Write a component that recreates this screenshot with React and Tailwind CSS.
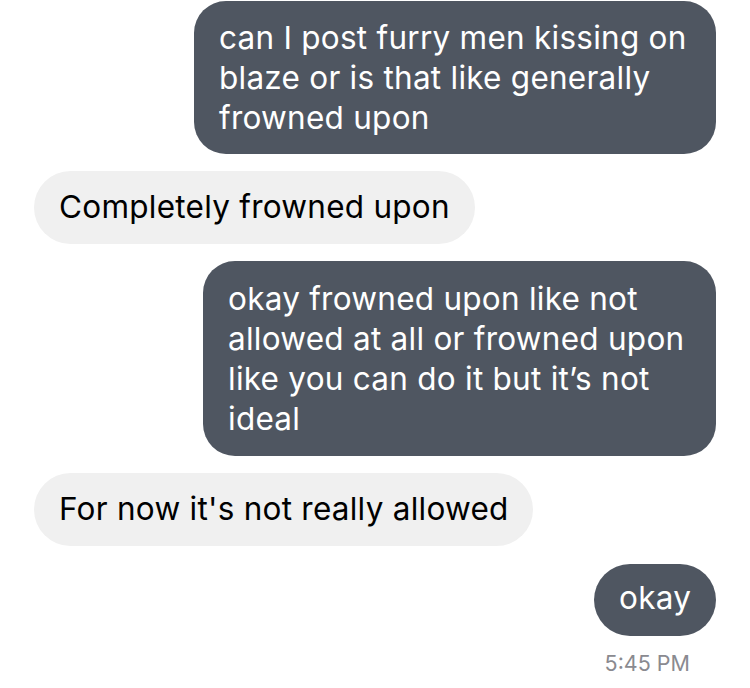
export default function App() {
  const font = { fontFamily: 'Inter, "Noto Sans", sans-serif' };
  return (
    <div className="w-[750px] h-[688px] bg-white overflow-hidden" style={font}>
      <div className="flex flex-col pt-[1px]">
        <div className="flex justify-end pr-[34px]">
          <div className="w-[522px] h-[153px] rounded-[32px] bg-[#4f5661] text-white text-[31.5px] leading-[40px] pl-[25px] pt-[17px] tracking-[0.25px]">
            can I post furry men kissing on<br />blaze or is that like generally<br />frowned upon
          </div>
        </div>
        <div className="flex justify-start pl-[34px] mt-[17px]">
          <div className="w-[441px] h-[73px] rounded-[37px] bg-[#f0f0f0] text-black text-[31.5px] leading-[40px] pl-[25px] pt-[16px] tracking-[0.25px]">
            Completely frowned upon
          </div>
        </div>
        <div className="flex justify-end pr-[34px] mt-[17px]">
          <div className="w-[513px] h-[195px] rounded-[32px] bg-[#4f5661] text-white text-[31.5px] leading-[40px] pl-[25px] pt-[18px] tracking-[0.25px]">
            okay frowned upon like not<br />allowed at all or frowned upon<br />like you can do it but it’s not<br />ideal
          </div>
        </div>
        <div className="flex justify-start pl-[34px] mt-[17px]">
          <div className="w-[499px] h-[73px] rounded-[37px] bg-[#f0f0f0] text-black text-[31.5px] leading-[40px] pl-[25px] pt-[16px] tracking-[0.25px]">
            For now it's not really allowed
          </div>
        </div>
        <div className="flex justify-end pr-[34px] mt-[18px]">
          <div className="w-[122px] h-[72px] rounded-[36px] bg-[#4f5661] text-white text-[31.5px] leading-[40px] pl-[25px] pt-[14px] tracking-[0.25px]">
            okay
          </div>
        </div>
        <div className="flex justify-end pr-[60px] mt-[13px]">
          <div className="text-[21.5px] leading-[28px] text-[#8a8a90]">5:45 PM</div>
        </div>
      </div>
    </div>
  );
}
